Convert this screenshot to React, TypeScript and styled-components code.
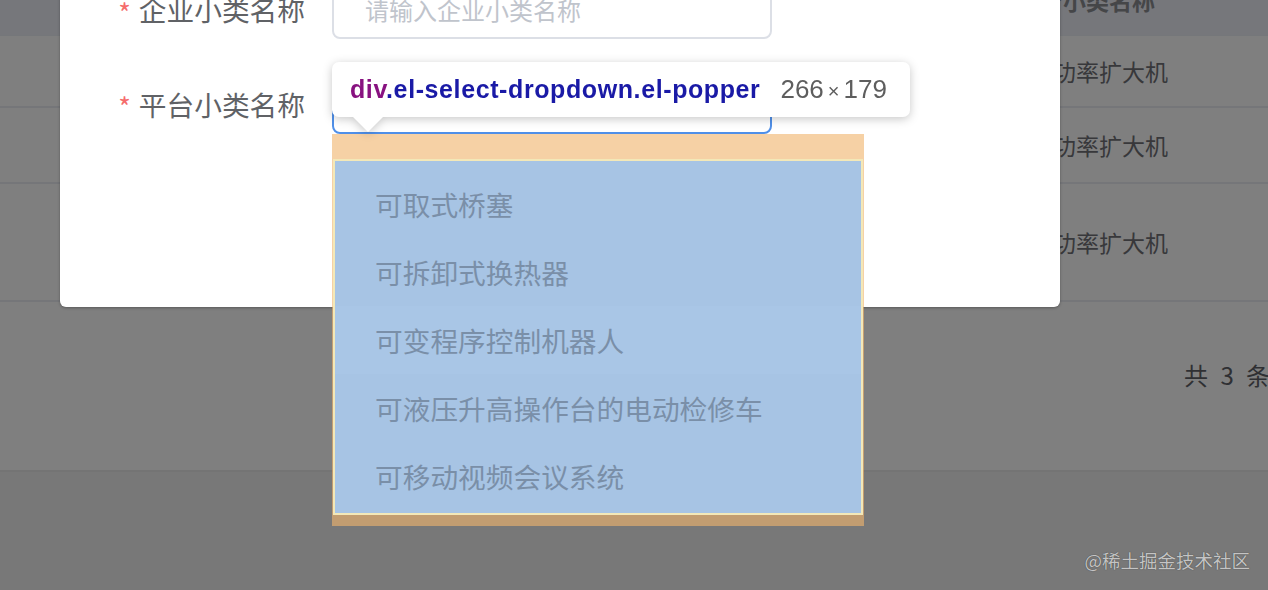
import React from "react";
import styled, { createGlobalStyle } from "styled-components";

const GlobalStyle = createGlobalStyle`
  html, body {
    margin: 0;
    padding: 0;
    overflow: hidden;
  }
  body {
    font-family: "Noto Sans CJK SC", "Noto Sans", sans-serif;
  }
`;

const options = [
  "可取式桥塞",
  "可拆卸式换热器",
  "可变程序控制机器人",
  "可液压升高操作台的电动检修车",
  "可移动视频会议系统",
];

const rows = [
  { height: 72, text: "功率扩大机" },
  { height: 76, text: "功率扩大机" },
  { height: 118, text: "功率扩大机" },
];

const App: React.FC = () => {
  return (
    <>
      <GlobalStyle />
      <Page>
        <Table>
          <HeaderRow>
            <HeaderCell>平台小类名称</HeaderCell>
          </HeaderRow>
          {rows.map((row, index) => (
            <BodyRow key={index} $height={row.height}>
              <BodyCell>{row.text}</BodyCell>
            </BodyRow>
          ))}
          <Pagination>
            <Total>共 3 条</Total>
          </Pagination>
          <Footer />
        </Table>

        <Overlay />

        <Dialog>
          <FormRow>
            <Label>
              <Star>*</Star>企业小类名称
            </Label>
            <Input placeholder="请输入企业小类名称" readOnly />
          </FormRow>
          <FormRow>
            <Label>
              <Star>*</Star>平台小类名称
            </Label>
            <Select />
          </FormRow>
        </Dialog>

        <MarginHighlight>
          <Dropdown>
            <OptionList>
              {options.map((option, index) => (
                <OptionItem key={option} $hover={index === 2}>
                  {option}
                </OptionItem>
              ))}
            </OptionList>
          </Dropdown>
        </MarginHighlight>

        <InspectTip>
          <TagName>
            <Tag>div</Tag>
            <Classes>.el-select-dropdown.el-popper</Classes>
          </TagName>
          <Size>
            266<Times>×</Times>179
          </Size>
          <TipArrow />
        </InspectTip>

        <Watermark>@稀土掘金技术社区</Watermark>
      </Page>
    </>
  );
};

export default App;

const Page = styled.div`
  position: relative;
  width: 1268px;
  height: 590px;
  overflow: hidden;
  background: #ffffff;
`;

const Table = styled.div`
  display: flex;
  flex-direction: column;
  margin-top: -36px;
`;

const HeaderRow = styled.div`
  display: flex;
  align-items: center;
  height: 72px;
  background: #eceef6;
  border-bottom: 1px solid #ebeef5;
  box-sizing: border-box;
`;

const HeaderCell = styled.div`
  padding-left: 1017px;
  font-size: 23px;
  font-weight: 700;
  color: #8a8c91;
  white-space: nowrap;
`;

const BodyRow = styled.div<{ $height: number }>`
  display: flex;
  align-items: center;
  height: ${(p) => p.$height}px;
  border-bottom: 2px solid #eaecf2;
  box-sizing: border-box;
`;

const BodyCell = styled.div`
  padding-left: 1053px;
  font-size: 23px;
  color: #707176;
  white-space: nowrap;
`;

const Pagination = styled.div`
  display: flex;
  align-items: center;
  height: 170px;
  border-bottom: 2px solid #e8e8e8;
  box-sizing: border-box;
  padding-bottom: 24px;
`;

const Total = styled.div`
  padding-left: 1184px;
  font-size: 24px;
  color: #5e6066;
  white-space: nowrap;
  word-spacing: 7px;
`;

const Footer = styled.div`
  height: 160px;
  background: #f0f0f0;
`;

const Overlay = styled.div`
  position: absolute;
  inset: 0;
  background: rgba(0, 0, 0, 0.5);
`;

const Dialog = styled.div`
  position: absolute;
  left: 60px;
  top: -57px;
  width: 1000px;
  box-sizing: border-box;
  padding: 40px 0 173px;
  display: flex;
  flex-direction: column;
  gap: 38px;
  background: #ffffff;
  border-radius: 6px;
  box-shadow: 0 1px 3px rgba(0, 0, 0, 0.3);
`;

const FormRow = styled.div`
  display: grid;
  grid-template-columns: 272px 440px;
  align-items: center;
`;

const Label = styled.label`
  display: flex;
  justify-content: flex-end;
  align-items: center;
  gap: 8px;
  padding-right: 27px;
  padding-bottom: 4px;
  font-size: 27.7px;
  color: #606266;
  white-space: nowrap;
`;

const Star = styled.span`
  color: #f56c6c;
  font-size: 27px;
  line-height: 1;
  padding-top: 6px;
`;

const Input = styled.input`
  height: 56px;
  box-sizing: border-box;
  border: 2px solid #dcdfe6;
  border-radius: 8px;
  padding: 0 31px 3px;
  font-family: "Noto Sans CJK SC", sans-serif;
  font-size: 24px;
  outline: none;
  &::placeholder {
    color: #c0c4cc;
  }
`;

const Select = styled.div`
  height: 57px;
  box-sizing: border-box;
  border: 2px solid #4f8fe8;
  border-radius: 8px;
`;

const MarginHighlight = styled.div`
  position: absolute;
  left: 332px;
  top: 134px;
  width: 532px;
  height: 392px;
  box-sizing: border-box;
  padding: 25px 1px 11px;
  background: rgba(240, 180, 110, 0.62);
`;

const Dropdown = styled.div`
  height: 100%;
  box-sizing: border-box;
  border: 2px solid #f3e8b8;
  background: #a7c4e4;
  overflow: hidden;
`;

const OptionList = styled.ul`
  list-style: none;
  margin: 0;
  padding: 9px 0 0;
`;

const OptionItem = styled.li<{ $hover?: boolean }>`
  display: flex;
  align-items: center;
  height: 68px;
  padding-left: 40px;
  font-size: 27.7px;
  color: #7a8fa8;
  white-space: nowrap;
  background: ${(p) => (p.$hover ? "#a9c6e6" : "transparent")};
`;

const InspectTip = styled.div`
  position: absolute;
  left: 332px;
  top: 62px;
  width: 578px;
  height: 55px;
  box-sizing: border-box;
  display: flex;
  align-items: center;
  gap: 20px;
  padding: 0 18px;
  background: #ffffff;
  border-radius: 7px;
  filter: drop-shadow(0 2px 5px rgba(0, 0, 0, 0.22));
  font-family: "Liberation Sans", Arial, sans-serif;
  white-space: nowrap;
`;

const TagName = styled.div`
  font-size: 25px;
  font-weight: 700;
  letter-spacing: 0.6px;
`;

const Tag = styled.span`
  color: #881280;
`;

const Classes = styled.span`
  color: #1a1aa6;
`;

const Size = styled.div`
  font-size: 26px;
  color: #5e5e5e;
`;

const Times = styled.span`
  font-size: 20px;
  padding: 0 4px;
`;

const TipArrow = styled.div`
  position: absolute;
  left: 20px;
  bottom: -15px;
  width: 0;
  height: 0;
  border-left: 16px solid transparent;
  border-right: 16px solid transparent;
  border-top: 16px solid #ffffff;
`;

const Watermark = styled.div`
  position: absolute;
  right: 18px;
  bottom: 17px;
  font-size: 18.5px;
  color: #c4c4c4;
  text-shadow: 0 0 1px rgba(0, 0, 0, 0.6);
  white-space: nowrap;
`;
